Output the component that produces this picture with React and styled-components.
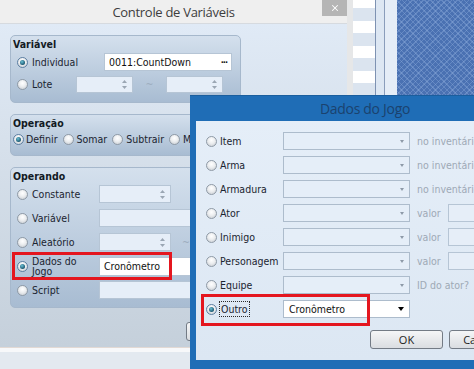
import React from 'react'
import styled, { createGlobalStyle, css } from 'styled-components'
import { X } from 'lucide-react'

const UI_FONT = `"DejaVu Sans Condensed", "DejaVu Sans", "Liberation Sans", sans-serif`
const TITLE_FONT = `"Open Sans", "Noto Sans", sans-serif`

const GlobalStyle = createGlobalStyle`
  html, body { margin:0; padding:0; overflow:hidden; background:#4b74b6; }
  * { box-sizing:border-box; }
`

const Desktop = styled.div`
  position:relative;
  width:474px;
  height:369px;
  overflow:hidden;
  display:flex;
  font-family:${UI_FONT};
  font-size:10.5px;
  color:#1b2430;
`

/* ---------- main window ---------- */
const MainWindow = styled.div`
  width:353px;
  flex:none;
  display:flex;
  flex-direction:column;
  border-right:6px solid #e6e7e8;
`
const TitleBar = styled.div`
  height:24px;
  flex:none;
  display:grid;
  grid-template-columns:1fr auto 1fr;
  align-items:center;
  background:#efefef;
  border-bottom:1px solid #d6dadf;
`
const Title = styled.div`
  grid-column:2;
  font-family:${TITLE_FONT};
  font-size:13px;
  letter-spacing:-0.3px;
  color:#3d3d3d;
`
const CloseButton = styled.div`
  grid-column:3;
  justify-self:end;
  align-self:start;
  width:25px;
  height:16px;
  background:#b5b5b5;
  display:flex;
  align-items:center;
  justify-content:center;
  color:#fff;
`
const Body = styled.div`
  flex:1;
  display:flex;
  flex-direction:column;
  gap:11px;
  padding:11px 0 0 10px;
  background:linear-gradient(to bottom, #e0eaf6 0%, #d7e1ec 35%, #c5d0db 100%);
`
const Group = styled.div`
  width:231px;
  height:${p => p.$h}px;
  flex:none;
  border:1px solid #a6b8cc;
  border-radius:5px;
  padding-top:2px;
  background:linear-gradient(to bottom, #d4e0ed 0%, #a8bcd2 100%);
  display:flex;
  flex-direction:column;
`
const GroupTitle = styled.div`
  font-weight:bold;
  line-height:12px;
  padding-left:2px;
  color:#121a24;
`
const Rows = styled.div`
  display:flex;
  flex-direction:column;
  gap:${p => p.$gap}px;
  margin-top:3px;
`
const Row = styled.div`
  position:relative;
  display:flex;
  align-items:center;
  height:18px;
  padding-left:6px;
`
const Choice = styled.label`
  display:flex;
  align-items:center;
  gap:${p => p.$gap ?? 4}px;
  width:${p => (p.$w ? `${p.$w}px` : 'auto')};
  flex:none;
  line-height:10.5px;
`
const Radio = styled.span`
  position:relative;
  width:11px;
  height:11px;
  flex:none;
  border-radius:50%;
  border:1px solid #8f9aa6;
  background:radial-gradient(circle at 50% 35%, #ffffff 0, #eceef0 45%, #c2c8ce 100%);
  ${p => p.$checked && css`
    border-color:#5d7fa2;
    &::after {
      content:'';
      position:absolute;
      inset:2px;
      border-radius:50%;
      background:radial-gradient(circle at 40% 35%, #6cc0d4 0, #15506a 75%);
    }
  `}
`
const Field = styled.div`
  width:${p => p.$w}px;
  height:${p => p.$h ?? 18}px;
  flex:none;
  display:flex;
  align-items:center;
  justify-content:space-between;
  padding:0 4px;
  margin-left:${p => p.$ml ?? 0}px;
  border:1px solid #b6c5d5;
  background:${p => (p.$white ? '#ffffff' : '#e6eef8')};
  color:#111;
`
const Dots = styled.span`
  font-weight:bold;
  font-size:9px;
  letter-spacing:-1px;
  line-height:6px;
  padding-bottom:4px;
`
const Tilde = styled.span`
  width:${p => p.$w}px;
  flex:none;
  text-align:center;
  color:#9eaebf;
`
const Arrows = styled.span`
  display:flex;
  flex-direction:column;
  gap:3px;
  margin-right:1px;
`
const Highlight = styled.div`
  position:absolute;
  left:${p => p.$x}px;
  top:${p => p.$y}px;
  width:${p => p.$w}px;
  height:${p => p.$h}px;
  border:3px solid #e4161f;
  pointer-events:none;
`
const OpRow = styled.div`
  display:flex;
  align-items:center;
  gap:5px;
  height:16px;
  margin-top:2px;
  padding-left:2px;
`
const ButtonRow = styled.div`
  display:flex;
  gap:6px;
  padding-left:${p => p.$pad}px;
  margin-top:${p => p.$mt}px;
`
const Button = styled.div`
  width:73px;
  height:19px;
  flex:none;
  display:flex;
  align-items:center;
  justify-content:center;
  border:1px solid #737b85;
  border-radius:3px;
  background:linear-gradient(to bottom, #f5f6f7 0%, #dadde1 100%);
  font-family:${TITLE_FONT};
  font-size:11px;
  color:#222;
`
const Footer = styled.div`
  height:22px;
  flex:none;
  border-top:1px solid #e2d9d4;
  box-shadow:inset 0 4px 0 #f7f8fa;
  background:#e3e9f0;
`

/* ---------- desktop decoration ---------- */
const Stripes = styled.div`
  width:22px;
  flex:none;
  background:repeating-linear-gradient(to bottom, #ffffff 0 12px, #dbe4ef 12px 25px);
  background-position:0 -4px;
`
const Rail = styled.div`
  width:${p => p.$w}px;
  flex:none;
  border-left:1px solid ${p => p.$line};
  background:${p => p.$bg};
`
const Pattern = styled.div`
  flex:1;
  background-color:#4a71b2;
  background-image:
    repeating-linear-gradient(45deg, rgba(150,180,225,0.35) 0 1px, transparent 1px 4px),
    repeating-linear-gradient(-45deg, rgba(150,180,225,0.35) 0 1px, transparent 1px 4px);
`

/* ---------- dialog ---------- */
const Dialog = styled.div`
  position:absolute;
  left:190px;
  top:95px;
  width:344px;
  height:274px;
  display:flex;
  flex-direction:column;
  background:#1f6db6;
  border-top:1px solid #1a5e9e;
`
const DialogTitle = styled.div`
  height:25px;
  flex:none;
  display:flex;
  align-items:center;
  justify-content:center;
  padding-left:6px;
  font-family:${TITLE_FONT};
  font-size:14px;
  letter-spacing:-0.3px;
  color:#1b426e;
`
const DialogBody = styled.div`
  flex:1;
  margin:0 6px 9px 6px;
  padding:11px 0 0 4px;
  display:flex;
  flex-direction:column;
  gap:6px;
  background:linear-gradient(to bottom, #e5eef8 0%, #dce7f3 100%);
`
const Select = styled(Field)`
  border-color:#adbccc;
  background:${p => (p.$white ? '#ffffff' : '#e5eef8')};
  padding:0 4px 0 5px;
`
const Caret = styled.span`
  width:0;
  height:0;
  border-left:${p => (p.$dark ? 3.5 : 2.5)}px solid transparent;
  border-right:${p => (p.$dark ? 3.5 : 2.5)}px solid transparent;
  border-top:${p => (p.$dark ? 4 : 3)}px solid ${p => (p.$dark ? '#000' : '#8e9aa8')};
  margin-left:auto;
  margin-right:1px;
`
const Hint = styled.span`
  margin-left:7px;
  color:#9ea9b6;
  white-space:nowrap;
`
const Focus = styled.span`
  outline:1px dotted #2a2a2a;
  padding:2px 1px;
`

const SpinArrows = () => (
  <Arrows>
    <svg width="5" height="3" viewBox="0 0 5 3"><path d="M0 3 L2.5 0 L5 3Z" fill="#9aa6b3" /></svg>
    <svg width="5" height="3" viewBox="0 0 5 3"><path d="M0 0 L5 0 L2.5 3Z" fill="#9aa6b3" /></svg>
  </Arrows>
)

const Spin = ({ w, h }) => (
  <Field $w={w} $h={h}>
    <span />
    <SpinArrows />
  </Field>
)

const DialogRow = ({ label, hint, valor }) => (
  <Row>
    <Choice $w={77} $gap={3}>
      <Radio />
      {label}
    </Choice>
    <Select $w={127}>
      <Caret />
    </Select>
    {hint && <Hint>{hint}</Hint>}
    {valor && (
      <>
        <Hint>valor</Hint>
        <Field $w={40} $ml={7} />
      </>
    )}
  </Row>
)

const dialogItems = [
  { label: 'Item', hint: 'no inventário' },
  { label: 'Arma', hint: 'no inventário' },
  { label: 'Armadura', hint: 'no inventário' },
  { label: 'Ator', valor: true },
  { label: 'Inimigo', valor: true },
  { label: 'Personagem', valor: true },
  { label: 'Equipe', hint: 'ID do ator?' },
]

export default function App() {
  return (
    <>
      <GlobalStyle />
      <Desktop>
        <MainWindow>
          <TitleBar>
            <Title>Controle de Variáveis</Title>
            <CloseButton>
              <X size={10} strokeWidth={2.5} />
            </CloseButton>
          </TitleBar>
          <Body>
            <Group $h={68}>
              <GroupTitle>Variável</GroupTitle>
              <Rows $gap={4}>
                <Row>
                  <Choice $w={87}>
                    <Radio $checked />
                    Individual
                  </Choice>
                  <Field $w={128} $white>
                    0011:CountDown
                    <Dots>...</Dots>
                  </Field>
                </Row>
                <Row>
                  <Choice $w={59}>
                    <Radio />
                    Lote
                  </Choice>
                  <Spin w={57} h={17} />
                  <Tilde $w={33}>~</Tilde>
                  <Spin w={57} h={17} />
                </Row>
              </Rows>
            </Group>

            <Group $h={42}>
              <GroupTitle>Operação</GroupTitle>
              <OpRow>
                <Choice $gap={2}><Radio $checked />Definir</Choice>
                <Choice $gap={3}><Radio />Somar</Choice>
                <Choice $gap={3}><Radio />Subtrair</Choice>
                <Choice $gap={3}><Radio />Multiplicar</Choice>
              </OpRow>
            </Group>

            <Group $h={141}>
              <GroupTitle>Operando</GroupTitle>
              <Rows $gap={6}>
                <Row>
                  <Choice $w={82}><Radio />Constante</Choice>
                  <Spin w={72} />
                </Row>
                <Row>
                  <Choice $w={82}><Radio />Variável</Choice>
                  <Field $w={130} />
                </Row>
                <Row>
                  <Choice $w={82}><Radio />Aleatório</Choice>
                  <Spin w={72} />
                  <Tilde $w={30}>~</Tilde>
                </Row>
                <Row>
                  <Choice $w={82}>
                    <Radio $checked />
                    <span>Dados do<br />Jogo</span>
                  </Choice>
                  <Field $w={130} $h={19} $white>Cronômetro</Field>
                  <Highlight $x={1} $y={-5} $w={160} $h={28} />
                </Row>
                <Row>
                  <Choice $w={82}><Radio />Script</Choice>
                  <Field $w={130} />
                </Row>
              </Rows>
            </Group>

            <ButtonRow $pad={176} $mt={3}>
              <Button>OK</Button>
            </ButtonRow>
          </Body>
          <Footer />
        </MainWindow>

        <Stripes />
        <Rail $w={9} $line="#7e92b2" $bg="#dde7f3" />
        <Rail $w={13} $line="#8a9dbb" $bg="#e5edf7" />
        <Pattern />

        <Dialog>
          <DialogTitle>Dados do Jogo</DialogTitle>
          <DialogBody>
            {dialogItems.map(it => (
              <DialogRow key={it.label} {...it} />
            ))}
            <Row>
              <Choice $w={77} $gap={3}>
                <Radio $checked />
                <Focus>Outro</Focus>
              </Choice>
              <Select $w={127} $white>
                Cronômetro
                <Caret $dark />
              </Select>
              <Highlight $x={1} $y={-6} $w={169} $h={32} />
            </Row>
            <ButtonRow $pad={170} $mt={6}>
              <Button>OK</Button>
              <Button>Cancelar</Button>
            </ButtonRow>
          </DialogBody>
        </Dialog>
      </Desktop>
    </>
  )
}
